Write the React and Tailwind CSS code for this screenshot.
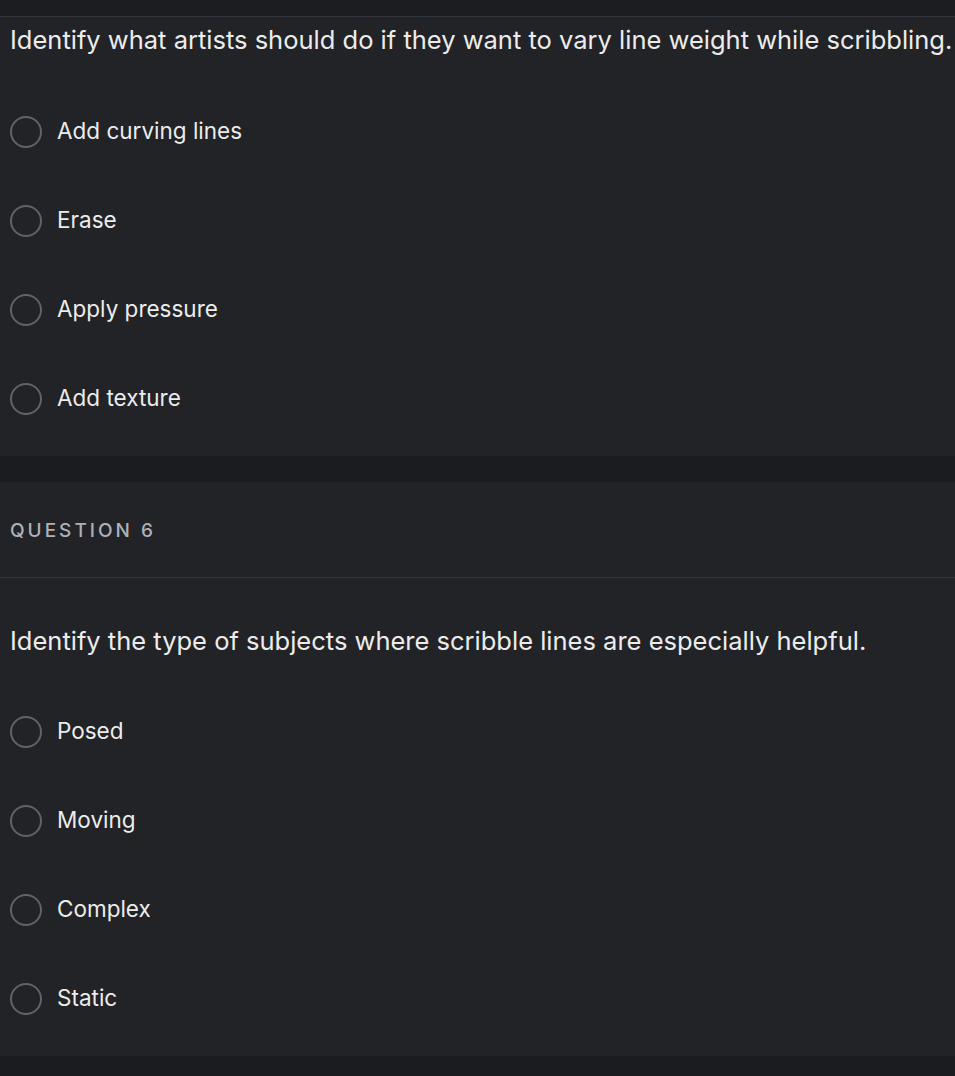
const font = { fontFamily: "Inter, 'Noto Sans', sans-serif" };

const Option = ({ label }) => (
  <div className="h-[89px] flex items-center pl-[10px]">
    <span className="w-[32px] h-[32px] rounded-full border-2 border-[#5f636a] shrink-0" />
    <span className="ml-[15px] text-[22.5px] text-[#ececec] leading-none">{label}</span>
  </div>
);

const QUESTIONS = [
  {
    text: "Identify what artists should do if they want to vary line weight while scribbling.",
    options: ["Add curving lines", "Erase", "Apply pressure", "Add texture"],
  },
  {
    label: "QUESTION 6",
    text: "Identify the type of subjects where scribble lines are especially helpful.",
    options: ["Posed", "Moving", "Complex", "Static"],
  },
];

export default function App() {
  const [first, second] = QUESTIONS;
  return (
    <div className="w-[955px] h-[1076px] overflow-hidden bg-[#1b1c1f]" style={font}>
      {/* previous card tail */}
      <div className="h-[17px] border-b border-[#34353a] bg-[#1c1d20]" />

      <div className="bg-[#222327] h-[439px]">
        <div className="h-[70px] pt-[7px] pl-[10px]">
          <p className="text-[25.5px] leading-[32px] text-[#ececec] whitespace-nowrap">{first.text}</p>
        </div>
        {first.options.map((o) => (
          <Option key={o} label={o} />
        ))}
      </div>

      <div className="h-[26px]" />

      <div className="bg-[#222327] h-[574px]">
        <div className="h-[96px] pt-[4px] flex items-center pl-[10px] border-b border-[#34353a]">
          <span className="text-[19px] tracking-[3px] text-[#aeb1b7] font-medium">{second.label}</span>
        </div>
        <div className="h-[109px] pt-[47px] pl-[10px]">
          <p className="text-[25.5px] leading-[32px] text-[#ececec] whitespace-nowrap">{second.text}</p>
        </div>
        {second.options.map((o) => (
          <Option key={o} label={o} />
        ))}
      </div>
    </div>
  );
}
